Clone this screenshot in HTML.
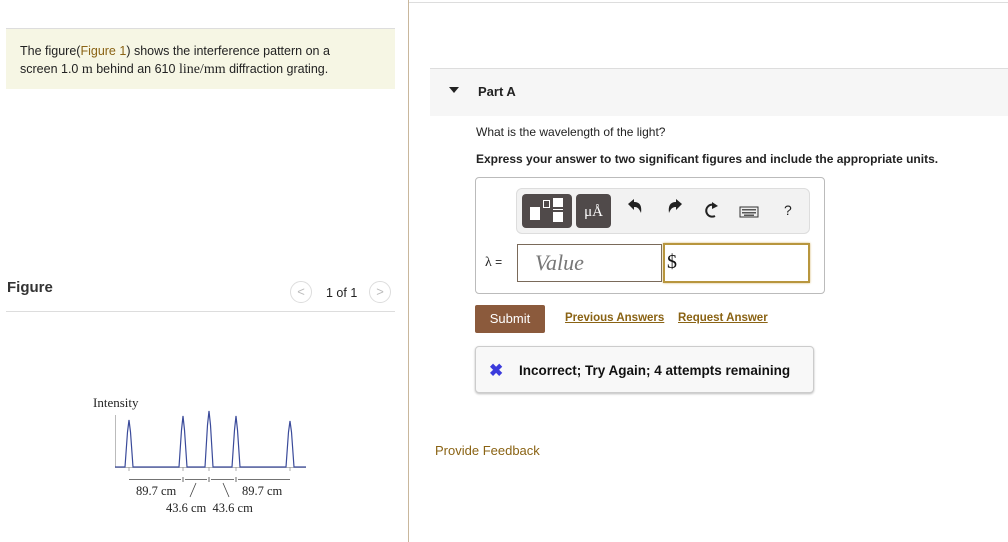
<!DOCTYPE html>
<html><head><style>
body{margin:0;width:1008px;height:542px;position:relative;background:#fff;font-family:"Liberation Sans",sans-serif;overflow:hidden}
.a{position:absolute}
.s{font-family:"Liberation Serif",serif}
</style></head><body>
<div class="a" style="left:408px;top:0;width:1px;height:542px;background:#c9b79c"></div>
<div class="a" style="left:409px;top:2px;width:599px;height:1px;background:#ddd"></div>
<div class="a" style="left:6px;top:28px;width:389px;height:1px;background:#ddd"></div>
<div class="a" style="left:6px;top:29px;width:389px;height:60px;background:#f6f6e4"></div>
<div class="a" style="left:20px;top:42px;font-size:12.5px;line-height:18px;color:#222">The figure(<span style="color:#8a6314">Figure 1</span>) shows the interference pattern on a<br>screen 1.0 <span class="s" style="font-size:14px">m</span> behind an 610 <span class="s" style="font-size:14px">line/mm</span> diffraction grating.</div>
<div class="a" style="left:7px;top:279px;font-size:15px;font-weight:bold;color:#333">Figure</div>
<div class="a" style="left:290px;top:281px;width:22px;height:22px;border:1px solid #ddd;border-radius:50%;box-sizing:border-box;color:#bbb;font-size:13px;text-align:center;line-height:20px">&lt;</div>
<div class="a" style="left:326px;top:286px;font-size:12.5px;color:#222">1 of 1</div>
<div class="a" style="left:369px;top:281px;width:22px;height:22px;border:1px solid #ddd;border-radius:50%;box-sizing:border-box;color:#bbb;font-size:13px;text-align:center;line-height:20px">&gt;</div>
<div class="a" style="left:6px;top:311px;width:389px;height:1px;background:#ddd"></div>
<div class="a s" style="left:93px;top:395px;font-size:13px;color:#222">Intensity</div>
<svg class="a" style="left:0;top:0" width="408" height="542">
<g stroke="#bbb" stroke-width="1" fill="none"><line x1="115.5" y1="415" x2="115.5" y2="467"/><line x1="115" y1="467.5" x2="306" y2="467.5"/></g>
<g stroke="#3a4a9a" stroke-width="1.2" fill="none">
<path d="M115 467 H125 L127.5 432 L129 420 L130.5 432 L133 467 H179 L181.5 430 L183 416 L184.5 430 L187 467 H205 L207.5 425 L209 411 L210.5 425 L213 467 H232 L234.5 430 L236 416 L237.5 430 L240 467 H286 L288.5 432 L290 421 L291.5 432 L294 467 H306"/>
</g>
<g stroke="#444" stroke-width="0.8">
<line x1="129" y1="479.5" x2="181" y2="479.5"/><line x1="185" y1="479.5" x2="207" y2="479.5"/><line x1="211" y1="479.5" x2="234" y2="479.5"/><line x1="238" y1="479.5" x2="290" y2="479.5"/>
<line x1="183" y1="477" x2="183" y2="482"/><line x1="209" y1="477" x2="209" y2="482"/><line x1="236" y1="477" x2="236" y2="482"/>
<line x1="196" y1="483" x2="190" y2="497"/><line x1="223" y1="483" x2="229" y2="497"/>
</g>
<g stroke="#999" stroke-width="0.8"><line x1="129" y1="467" x2="129" y2="471"/><line x1="183" y1="467" x2="183" y2="471"/><line x1="209" y1="467" x2="209" y2="471"/><line x1="236" y1="467" x2="236" y2="471"/><line x1="290" y1="467" x2="290" y2="471"/></g>
</svg>
<div class="a s" style="left:136px;top:484px;font-size:12.5px;color:#222">89.7 cm</div>
<div class="a s" style="left:242px;top:484px;font-size:12.5px;color:#222">89.7 cm</div>
<div class="a s" style="left:166px;top:501px;font-size:12.5px;color:#222">43.6 cm&nbsp; 43.6 cm</div>

<div class="a" style="left:430px;top:68px;width:578px;height:47px;background:#f6f6f6;border-top:1px solid #ddd"></div>
<div class="a" style="left:449px;top:87px;width:0;height:0;border-left:5px solid transparent;border-right:5px solid transparent;border-top:6px solid #222"></div>
<div class="a" style="left:478px;top:84px;font-size:13px;font-weight:bold;color:#222">Part A</div>
<div class="a" style="left:476px;top:125px;font-size:12px;color:#222">What is the wavelength of the light?</div>
<div class="a" style="left:476px;top:152px;font-size:12px;font-weight:bold;color:#222">Express your answer to two significant figures and include the appropriate units.</div>

<div class="a" style="left:475px;top:177px;width:350px;height:117px;border:1px solid #bbb;border-radius:4px;box-sizing:border-box"></div>
<div class="a" style="left:516px;top:188px;width:294px;height:46px;background:#f2f2f2;border:1px solid #ddd;border-radius:6px;box-sizing:border-box"></div>
<div class="a" style="left:522px;top:194px;width:50px;height:34px;background:#504a4a;border-radius:4px"></div>
<div class="a" style="left:530px;top:207px;width:10px;height:13px;background:#fff"></div>
<div class="a" style="left:543px;top:200px;width:5px;height:6px;border:1px solid #fff"></div>
<div class="a" style="left:553px;top:198px;width:10px;height:9px;background:#fff"></div>
<div class="a" style="left:553px;top:209px;width:10px;height:1px;background:#fff"></div>
<div class="a" style="left:553px;top:212px;width:10px;height:10px;background:#fff"></div>
<div class="a" style="left:576px;top:194px;width:35px;height:34px;background:#504a4a;border-radius:4px;color:#fff;text-align:center;line-height:36px;font-size:15px;font-family:'Liberation Serif',serif">μÅ</div>
<svg class="a" style="left:620px;top:196px" width="190" height="32">
<path d="M8 8 L14 3 V6 C20 6 22 10 21 17 C19 12 17 11 14 11 V14 Z" fill="#222"/>
<path d="M62 8 L56 3 V6 C50 6 48 10 49 17 C51 12 53 11 56 11 V14 Z" fill="#222"/>
<path d="M96 10 A6 6 0 1 0 95 20" fill="none" stroke="#222" stroke-width="2"/>
<path d="M92 6 L98 10 L92 13 Z" fill="#222"/>
<rect x="120" y="11" width="18" height="10" fill="#eee" stroke="#333"/>
<g fill="#555"><rect x="122" y="13" width="14" height="1.5"/><rect x="122" y="16" width="14" height="1.5"/><rect x="124" y="18.5" width="10" height="1.5"/></g>
</svg>
<div class="a" style="left:784px;top:202px;font-size:14px;color:#222">?</div>
<div class="a" style="left:485px;top:255px;font-size:12px;color:#222"><span class="s" style="font-size:14px">λ</span> =</div>
<div class="a" style="left:517px;top:244px;width:145px;height:38px;border:1px solid #7a6a5a;box-sizing:border-box"></div>
<div class="a s" style="left:535px;top:250px;font-size:22px;font-style:italic;color:#777">Value</div>
<div class="a" style="left:663px;top:243px;width:147px;height:40px;border:2px solid #b8963e;box-sizing:border-box;box-shadow:0 0 2px #d4b46a"></div>
<div class="a s" style="left:667px;top:251px;font-size:20px;color:#111">$</div>

<div class="a" style="left:475px;top:305px;width:70px;height:28px;background:#8b5a3c;border-radius:2px;color:#fff;font-size:13px;text-align:center;line-height:28px">Submit</div>
<div class="a" style="left:565px;top:312px;font-size:11.5px;font-weight:bold;color:#8a6314;text-decoration:underline">Previous Answers</div>
<div class="a" style="left:678px;top:312px;font-size:11.5px;font-weight:bold;color:#8a6314;text-decoration:underline">Request Answer</div>
<div class="a" style="left:475px;top:346px;width:339px;height:47px;background:#f8f8f8;border:1px solid #ccc;border-radius:4px;box-sizing:border-box;box-shadow:0 1px 2px #bbb"></div>
<div class="a" style="left:489px;top:361px;font-size:17px;font-weight:bold;color:#3b3bdc">✖</div>
<div class="a" style="left:519px;top:363px;font-size:13.5px;font-weight:bold;color:#111">Incorrect; Try Again; 4 attempts remaining</div>
<div class="a" style="left:435px;top:443px;font-size:13px;color:#8a6314">Provide Feedback</div>
</body></html>
